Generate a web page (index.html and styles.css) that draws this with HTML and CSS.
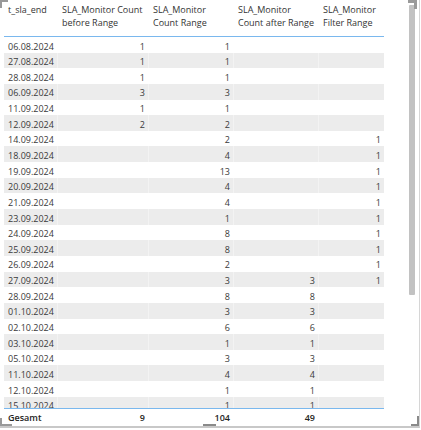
FILE: index.html
```html
<!DOCTYPE html>
<html>
<head>
<meta charset="utf-8">
<link rel="stylesheet" href="styles.css">
</head>
<body>
<div class="visual">
  <div class="table">
    <div class="row head">
      <div class="c">t_sla_end</div>
      <div class="c">SLA_Monitor Count before Range</div>
      <div class="c">SLA_Monitor Count Range</div>
      <div class="c">SLA_Monitor Count after Range</div>
      <div class="c">SLA_Monitor Filter Range</div>
    </div>
    <div class="body">
      <div class="row"><div class="c">06.08.2024</div><div class="c n">1</div><div class="c n">1</div><div class="c n"></div><div class="c n"></div></div>
      <div class="row"><div class="c">27.08.2024</div><div class="c n">1</div><div class="c n">1</div><div class="c n"></div><div class="c n"></div></div>
      <div class="row"><div class="c">28.08.2024</div><div class="c n">1</div><div class="c n">1</div><div class="c n"></div><div class="c n"></div></div>
      <div class="row"><div class="c">06.09.2024</div><div class="c n">3</div><div class="c n">3</div><div class="c n"></div><div class="c n"></div></div>
      <div class="row"><div class="c">11.09.2024</div><div class="c n">1</div><div class="c n">1</div><div class="c n"></div><div class="c n"></div></div>
      <div class="row"><div class="c">12.09.2024</div><div class="c n">2</div><div class="c n">2</div><div class="c n"></div><div class="c n"></div></div>
      <div class="row"><div class="c">14.09.2024</div><div class="c n"></div><div class="c n">2</div><div class="c n"></div><div class="c n">1</div></div>
      <div class="row"><div class="c">18.09.2024</div><div class="c n"></div><div class="c n">4</div><div class="c n"></div><div class="c n">1</div></div>
      <div class="row"><div class="c">19.09.2024</div><div class="c n"></div><div class="c n">13</div><div class="c n"></div><div class="c n">1</div></div>
      <div class="row"><div class="c">20.09.2024</div><div class="c n"></div><div class="c n">4</div><div class="c n"></div><div class="c n">1</div></div>
      <div class="row"><div class="c">21.09.2024</div><div class="c n"></div><div class="c n">4</div><div class="c n"></div><div class="c n">1</div></div>
      <div class="row"><div class="c">23.09.2024</div><div class="c n"></div><div class="c n">1</div><div class="c n"></div><div class="c n">1</div></div>
      <div class="row"><div class="c">24.09.2024</div><div class="c n"></div><div class="c n">8</div><div class="c n"></div><div class="c n">1</div></div>
      <div class="row"><div class="c">25.09.2024</div><div class="c n"></div><div class="c n">8</div><div class="c n"></div><div class="c n">1</div></div>
      <div class="row"><div class="c">26.09.2024</div><div class="c n"></div><div class="c n">2</div><div class="c n"></div><div class="c n">1</div></div>
      <div class="row"><div class="c">27.09.2024</div><div class="c n"></div><div class="c n">3</div><div class="c n">3</div><div class="c n">1</div></div>
      <div class="row"><div class="c">28.09.2024</div><div class="c n"></div><div class="c n">8</div><div class="c n">8</div><div class="c n"></div></div>
      <div class="row"><div class="c">01.10.2024</div><div class="c n"></div><div class="c n">3</div><div class="c n">3</div><div class="c n"></div></div>
      <div class="row"><div class="c">02.10.2024</div><div class="c n"></div><div class="c n">6</div><div class="c n">6</div><div class="c n"></div></div>
      <div class="row"><div class="c">03.10.2024</div><div class="c n"></div><div class="c n">1</div><div class="c n">1</div><div class="c n"></div></div>
      <div class="row"><div class="c">05.10.2024</div><div class="c n"></div><div class="c n">3</div><div class="c n">3</div><div class="c n"></div></div>
      <div class="row"><div class="c">11.10.2024</div><div class="c n"></div><div class="c n">4</div><div class="c n">4</div><div class="c n"></div></div>
      <div class="row"><div class="c">12.10.2024</div><div class="c n"></div><div class="c n">1</div><div class="c n">1</div><div class="c n"></div></div>
      <div class="row"><div class="c">15.10.2024</div><div class="c n"></div><div class="c n">1</div><div class="c n">1</div><div class="c n"></div></div>
    </div>
    <div class="row total">
      <div class="c">Gesamt</div><div class="c n">9</div><div class="c n">104</div><div class="c n">49</div><div class="c n"></div>
    </div>
  </div>
  <div class="scroll"></div>
  <div class="corner tl"></div>
  <div class="corner tr"></div>
  <div class="corner bl"></div>
  <div class="corner br"></div>
  <div class="handle"></div>
</div>
</body>
</html>
```

FILE: styles.css
```css
html, body {
  margin: 0;
  padding: 0;
  background: #ffffff;
}
body {
  font-family: "Open Sans", "Noto Sans", sans-serif;
  font-size: 9px;
  color: #3a3a3a;
}
.visual {
  position: relative;
  width: 420px;
  height: 428px;
  border-right: 1px solid #d6d6d6;
  border-bottom: 2px solid #c8c8c8;
  box-sizing: border-box;
  overflow: hidden;
}
.table {
  margin-left: 4px;
  width: 380px;
}
.row {
  display: grid;
  grid-template-columns: 53px 91px 85px 85px 66px;
  grid-template-rows: 15.65px;
  height: 15.65px;
  align-items: start;
}
.c {
  padding: 1.5px 3px 0 4px;
  white-space: nowrap;
  line-height: 15px;
}
.n {
  text-align: right;
}
.head {
  grid-template-rows: 36px;
  height: 36px;
  border-bottom: 1px solid #7ab8ee;
  box-sizing: content-box;
}
.head .c {
  white-space: normal;
  line-height: 13px;
  padding-top: 3px;
  padding-left: 5px;
  color: #333333;
}
.head .c:first-child {
  padding-left: 4px;
}
.body {
  height: 371px;
  overflow: hidden;
}
.body .row:nth-child(even) {
  background: #ececec;
}
.body .row:nth-child(even) .c + .c {
  box-shadow: inset 1px 0 0 #f3f3f3;
}
.body .row .c {
  height: 15.65px;
  box-sizing: border-box;
}
.total {
  grid-template-rows: 17px;
  height: 17px;
  border-top: 1px solid #7ab8ee;
  font-weight: 600;
  color: #252423;
}
.total .c {
  line-height: 17px;
  padding-top: 0;
}
.scroll {
  position: absolute;
  left: 409px;
  top: 5px;
  width: 6px;
  height: 290px;
  background: #c2c2c2;
  border-radius: 1px;
}
.corner {
  position: absolute;
  width: 6px;
  height: 6px;
  border-color: #999999;
  border-style: solid;
  border-width: 0;
}
.tl { left: 0; top: 0; border-left-width: 2px; border-top-width: 2px; }
.tr { right: 2px; top: 0; border-right-width: 3px; border-top-width: 3px; border-color: #9a9a9a; }
.bl { left: 0; bottom: 0; width: 10px; border-left-width: 2px; border-bottom-width: 2px; }
.br { right: 0; bottom: 0; width: 6px; height: 8px; border-right-width: 2px; border-bottom-width: 2px; border-color: #8a8a8a; }
.handle {
  position: absolute;
  left: 203px;
  bottom: 0;
  width: 13px;
  height: 2px;
  background: #8a8a8a;
}
```
